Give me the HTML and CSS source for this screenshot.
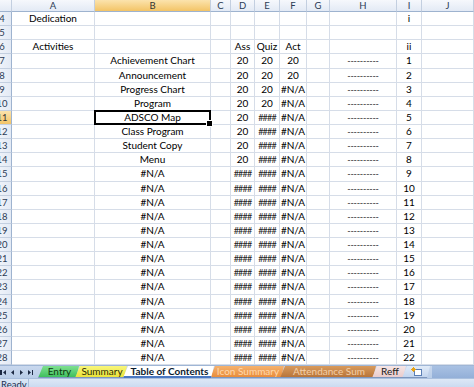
FILE: index.html
```html
<!DOCTYPE html>
<html>
<head>
<meta charset="utf-8">
<link rel="stylesheet" href="styles.css">
</head>
<body>
<div class="app">
  <div class="sheet">
    <div class="row hdr">
      <div class="c rh corner"></div>
      <div class="c ch">A</div>
      <div class="c ch sel">B</div>
      <div class="c ch">C</div>
      <div class="c ch">D</div>
      <div class="c ch">E</div>
      <div class="c ch">F</div>
      <div class="c ch">G</div>
      <div class="c ch">H</div>
      <div class="c ch">I</div>
      <div class="c ch">J</div>
    </div>
    <div class="row"><div class="c rh"><span>4</span></div><div class="c">Dedication</div><div class="c"></div><div class="c"></div><div class="c"></div><div class="c"></div><div class="c"></div><div class="c"></div><div class="c"></div><div class="c">i</div><div class="c"></div></div>
    <div class="row"><div class="c rh"><span>5</span></div><div class="c"></div><div class="c"></div><div class="c"></div><div class="c"></div><div class="c"></div><div class="c"></div><div class="c"></div><div class="c"></div><div class="c"></div><div class="c"></div></div>
    <div class="row"><div class="c rh"><span>6</span></div><div class="c">Activities</div><div class="c"></div><div class="c"></div><div class="c">Ass</div><div class="c">Quiz</div><div class="c">Act</div><div class="c"></div><div class="c"></div><div class="c">ii</div><div class="c"></div></div>
    <div class="row"><div class="c rh"><span>7</span></div><div class="c"></div><div class="c">Achievement Chart</div><div class="c"></div><div class="c">20</div><div class="c">20</div><div class="c">20</div><div class="c"></div><div class="c dash">----------</div><div class="c">1</div><div class="c"></div></div>
    <div class="row"><div class="c rh"><span>8</span></div><div class="c"></div><div class="c">Announcement</div><div class="c"></div><div class="c">20</div><div class="c">20</div><div class="c">20</div><div class="c"></div><div class="c dash">----------</div><div class="c">2</div><div class="c"></div></div>
    <div class="row"><div class="c rh"><span>9</span></div><div class="c"></div><div class="c">Progress Chart</div><div class="c"></div><div class="c">20</div><div class="c">20</div><div class="c">#N/A</div><div class="c"></div><div class="c dash">----------</div><div class="c">3</div><div class="c"></div></div>
    <div class="row"><div class="c rh"><span>10</span></div><div class="c"></div><div class="c">Program</div><div class="c"></div><div class="c">20</div><div class="c">20</div><div class="c">#N/A</div><div class="c"></div><div class="c dash">----------</div><div class="c">4</div><div class="c"></div></div>
    <div class="row"><div class="c rh sel"><span>11</span></div><div class="c"></div><div class="c active">ADSCO Map</div><div class="c"></div><div class="c">20</div><div class="c hash">####</div><div class="c">#N/A</div><div class="c"></div><div class="c dash">----------</div><div class="c">5</div><div class="c"></div></div>
    <div class="row"><div class="c rh"><span>12</span></div><div class="c"></div><div class="c">Class Program</div><div class="c"></div><div class="c">20</div><div class="c hash">####</div><div class="c">#N/A</div><div class="c"></div><div class="c dash">----------</div><div class="c">6</div><div class="c"></div></div>
    <div class="row"><div class="c rh"><span>13</span></div><div class="c"></div><div class="c">Student Copy</div><div class="c"></div><div class="c">20</div><div class="c hash">####</div><div class="c">#N/A</div><div class="c"></div><div class="c dash">----------</div><div class="c">7</div><div class="c"></div></div>
    <div class="row"><div class="c rh"><span>14</span></div><div class="c"></div><div class="c">Menu</div><div class="c"></div><div class="c">20</div><div class="c hash">####</div><div class="c">#N/A</div><div class="c"></div><div class="c dash">----------</div><div class="c">8</div><div class="c"></div></div>
    <div class="row"><div class="c rh"><span>15</span></div><div class="c"></div><div class="c">#N/A</div><div class="c"></div><div class="c hash">####</div><div class="c hash">####</div><div class="c">#N/A</div><div class="c"></div><div class="c dash">----------</div><div class="c">9</div><div class="c"></div></div>
    <div class="row"><div class="c rh"><span>16</span></div><div class="c"></div><div class="c">#N/A</div><div class="c"></div><div class="c hash">####</div><div class="c hash">####</div><div class="c">#N/A</div><div class="c"></div><div class="c dash">----------</div><div class="c">10</div><div class="c"></div></div>
    <div class="row"><div class="c rh"><span>17</span></div><div class="c"></div><div class="c">#N/A</div><div class="c"></div><div class="c hash">####</div><div class="c hash">####</div><div class="c">#N/A</div><div class="c"></div><div class="c dash">----------</div><div class="c">11</div><div class="c"></div></div>
    <div class="row"><div class="c rh"><span>18</span></div><div class="c"></div><div class="c">#N/A</div><div class="c"></div><div class="c hash">####</div><div class="c hash">####</div><div class="c">#N/A</div><div class="c"></div><div class="c dash">----------</div><div class="c">12</div><div class="c"></div></div>
    <div class="row"><div class="c rh"><span>19</span></div><div class="c"></div><div class="c">#N/A</div><div class="c"></div><div class="c hash">####</div><div class="c hash">####</div><div class="c">#N/A</div><div class="c"></div><div class="c dash">----------</div><div class="c">13</div><div class="c"></div></div>
    <div class="row"><div class="c rh"><span>20</span></div><div class="c"></div><div class="c">#N/A</div><div class="c"></div><div class="c hash">####</div><div class="c hash">####</div><div class="c">#N/A</div><div class="c"></div><div class="c dash">----------</div><div class="c">14</div><div class="c"></div></div>
    <div class="row"><div class="c rh"><span>21</span></div><div class="c"></div><div class="c">#N/A</div><div class="c"></div><div class="c hash">####</div><div class="c hash">####</div><div class="c">#N/A</div><div class="c"></div><div class="c dash">----------</div><div class="c">15</div><div class="c"></div></div>
    <div class="row"><div class="c rh"><span>22</span></div><div class="c"></div><div class="c">#N/A</div><div class="c"></div><div class="c hash">####</div><div class="c hash">####</div><div class="c">#N/A</div><div class="c"></div><div class="c dash">----------</div><div class="c">16</div><div class="c"></div></div>
    <div class="row"><div class="c rh"><span>23</span></div><div class="c"></div><div class="c">#N/A</div><div class="c"></div><div class="c hash">####</div><div class="c hash">####</div><div class="c">#N/A</div><div class="c"></div><div class="c dash">----------</div><div class="c">17</div><div class="c"></div></div>
    <div class="row"><div class="c rh"><span>24</span></div><div class="c"></div><div class="c">#N/A</div><div class="c"></div><div class="c hash">####</div><div class="c hash">####</div><div class="c">#N/A</div><div class="c"></div><div class="c dash">----------</div><div class="c">18</div><div class="c"></div></div>
    <div class="row"><div class="c rh"><span>25</span></div><div class="c"></div><div class="c">#N/A</div><div class="c"></div><div class="c hash">####</div><div class="c hash">####</div><div class="c">#N/A</div><div class="c"></div><div class="c dash">----------</div><div class="c">19</div><div class="c"></div></div>
    <div class="row"><div class="c rh"><span>26</span></div><div class="c"></div><div class="c">#N/A</div><div class="c"></div><div class="c hash">####</div><div class="c hash">####</div><div class="c">#N/A</div><div class="c"></div><div class="c dash">----------</div><div class="c">20</div><div class="c"></div></div>
    <div class="row"><div class="c rh"><span>27</span></div><div class="c"></div><div class="c">#N/A</div><div class="c"></div><div class="c hash">####</div><div class="c hash">####</div><div class="c">#N/A</div><div class="c"></div><div class="c dash">----------</div><div class="c">21</div><div class="c"></div></div>
    <div class="row"><div class="c rh"><span>28</span></div><div class="c"></div><div class="c">#N/A</div><div class="c"></div><div class="c hash">####</div><div class="c hash">####</div><div class="c">#N/A</div><div class="c"></div><div class="c dash">----------</div><div class="c">22</div><div class="c"></div></div>
  </div>
  <div class="tabbar">
    <div class="nav">
      <svg width="36" height="13" viewBox="0 0 36 13">
        <rect x="0" y="4" width="2" height="5" fill="#1d2a44"/>
        <path d="M3 6.5 L6 4 L6 9 Z" fill="#1d2a44"/>
        <path d="M11 6.5 L14 4 L14 9 Z" fill="#1d2a44"/>
        <path d="M20 4 L23 6.5 L20 9 Z" fill="#1d2a44"/>
        <path d="M28 4 L31 6.5 L28 9 Z" fill="#1d2a44"/>
        <rect x="32" y="4" width="1" height="5" fill="#1d2a44"/>
      </svg>
    </div>
    <div class="tabs">
      <div class="tab t-entry">Entry</div>
      <div class="tab t-summary">Summary</div>
      <div class="tab t-toc">Table of Contents</div>
      <div class="tab t-icon">Icon Summary</div>
      <div class="tab t-att">Attendance Sum</div>
      <div class="tab t-reff">Reff</div>
      <div class="tab t-new">
        <svg width="12" height="10" viewBox="0 0 12 10">
          <rect x="3.5" y="2.5" width="7" height="6" fill="#ffffff" stroke="#5b7fb5" stroke-width="1"/>
          <path d="M1 1 L4 4 M4 1 L1 4 M2.5 0 L2.5 5 M0 2.5 L5 2.5" stroke="#e8a317" stroke-width="1"/>
        </svg>
      </div>
    </div>
    <div class="hscroll"></div>
  </div>
  <div class="status"><span class="ready">Ready</span><span class="sep"></span></div>
</div>
</body>
</html>
```
FILE: styles.css
```css
* { box-sizing: border-box; }
html, body { margin: 0; padding: 0; }
body {
  width: 474px;
  height: 387px;
  overflow: hidden;
  background: #ffffff;
  font-family: Lato, "Liberation Sans", sans-serif;
  font-size: 10px;
  color: #000;
}
.app { display: flex; flex-direction: column; width: 474px; height: 387px; }
.sheet { display: flex; flex-direction: column; height: 365px; flex: none; }
.row {
  display: grid;
  grid-template-columns: 12px 83px 116px 20px 24px 25px 27px 23px 67px 25px 1fr;
  height: 14.125px;
  flex: none;
}
.row.hdr { height: 12px; }
.c {
  border-right: 1px solid #d6dde8;
  border-bottom: 1px solid #d6dde8;
  text-align: center;
  white-space: nowrap;
  overflow: hidden;
  line-height: 13px;
  position: relative;
}
.hdr .c {
  background: linear-gradient(#f6f8fc, #e3eaf5);
  border-right: 1px solid #c3cfe0;
  border-bottom: 1px solid #9eb3cf;
  color: #2b3b55;
  line-height: 12px;
  font-size: 9.5px;
}
.hdr .c.sel, .rh.sel {
  background: linear-gradient(#fbe3ad, #f3c466);
  color: #333;
}
.rh {
  background: linear-gradient(90deg, #eef2f9, #e3eaf5);
  border-right: 1px solid #9eb3cf;
  border-bottom: 1px solid #c3cfe0;
  color: #2b3b55;
  font-size: 9.5px;
  overflow: hidden;
}
.rh span {
  display: block;
  width: 20px;
  margin-left: -8px;
  text-align: center;
}
.corner { background: linear-gradient(#eef2f9, #dfe7f3); }
.hash { letter-spacing: -0.8px; font-size: 9px; color: #222; }
.dash { letter-spacing: -0.2px; font-size: 9px; color: #333; }
.active { overflow: visible; z-index: 2; }
.active::after {
  content: "";
  position: absolute;
  left: -1px; top: -1px; right: -1px; bottom: -1px;
  border: 2px solid #000;
}
.active::before {
  content: "";
  position: absolute;
  right: -3px; bottom: -3px;
  width: 5px; height: 5px;
  background: #000;
  border: 1px solid #fff;
  z-index: 3;
}
.tabbar {
  height: 13px;
  display: flex;
  flex: none;
  background: linear-gradient(#c9d8ee, #b9cde8);
  border-top: 1px solid #9fb6d6;
}
.nav { width: 38px; flex: none; display: flex; align-items: center; }
.nav svg { display: block; }
.tabs { display: flex; height: 100%; flex: none; }
.tab {
  flex: none;
  height: 12px;
  line-height: 11px;
  font-size: 10px;
  text-align: center;
  padding: 0 2px 0 4px;
  margin-right: -4px;
  clip-path: polygon(0 100%, 5px 0, 100% 0, calc(100% - 3px) 100%);
  white-space: nowrap;
  color: #1a1a1a;
  border-bottom: 1px solid #7d96bd;
  overflow: hidden;
}
.t-entry { background: linear-gradient(#7fe08f, #3fbf5e); color: #0e3a10; width: 41px; }
.t-summary { background: linear-gradient(#f8f67a, #eae33a); color: #2a2a00; width: 52px; }
.t-toc {
  background: #ffffff;
  font-weight: bold;
  font-size: 10px;
  color: #0b1a2e;
  width: 91px;
  z-index: 2;
  border-bottom: 2px solid #4a78c2;
}
.t-icon { background: linear-gradient(#f5b26e, #e98d3b); color: #ffd9ae; width: 74px; }
.t-att { background: linear-gradient(#d89a5c, #b8753a); color: #f3cfa8; width: 96px; }
.t-reff { background: linear-gradient(#f6e6e6, #e9cccc); color: #1a1a1a; width: 34px; }
.t-new { background: linear-gradient(#e1ebf8, #c3d5ee); width: 28px; display: flex; align-items: center; justify-content: center; }
.hscroll { flex: 1; background: linear-gradient(#a9c1e3, #93afd8); margin-left: 6px; }
.status {
  height: 9px;
  display: flex;
  flex: none;
  background: linear-gradient(#dde8f6, #cbdbf0);
  border-top: 1px solid #aac0de;
  font-size: 9.5px;
  color: #1e2f4f;
  line-height: 11px;
  overflow: hidden;
}
.ready { padding-left: 1px; width: 28px; }
.sep { width: 1px; background: #a9bddb; height: 100%; }
```
